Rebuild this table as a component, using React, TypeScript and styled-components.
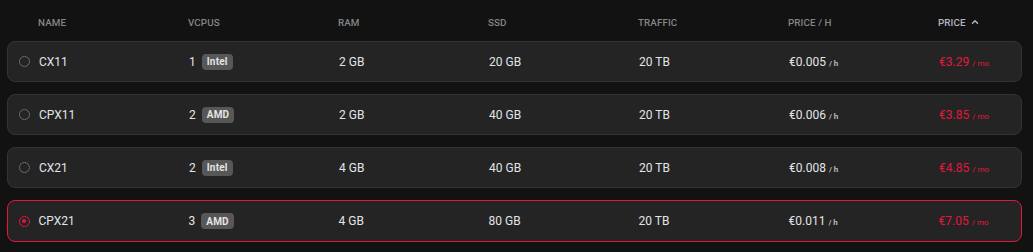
import React, { useState } from 'react';
import styled, { createGlobalStyle, css } from 'styled-components';
import { ChevronUp } from 'lucide-react';

const GlobalStyle = createGlobalStyle`
  html, body {
    margin: 0;
    padding: 0;
    background: #121212;
  }
  body {
    font-family: Roboto, "Liberation Sans", Arial, sans-serif;
    -webkit-font-smoothing: antialiased;
  }
`;

const Page = styled.div`
  padding: 0 11px 0 7px;
  display: flex;
  flex-direction: column;
  gap: 12px;
`;

const COLUMNS = '20px 150px 150px 150px 150px 150px 150px 1fr';

const HeaderRow = styled.div`
  display: grid;
  grid-template-columns: ${COLUMNS};
  align-items: center;
  box-sizing: border-box;
  height: 29px;
  padding: 15px 0 0 11px;
`;

const HeaderCell = styled.div<{ $active?: boolean }>`
  display: flex;
  align-items: center;
  gap: 4px;
  font-size: 9.8px;
  font-weight: 500;
  letter-spacing: 0.1px;
  text-transform: uppercase;
  color: ${({ $active }) => ($active ? '#b4b4c2' : '#858585')};
`;

const Row = styled.div<{ $selected?: boolean }>`
  display: grid;
  grid-template-columns: ${COLUMNS};
  align-items: center;
  box-sizing: border-box;
  height: 41px;
  padding-left: 11px;
  background: #242424;
  border: 1px solid #343434;
  border-radius: 8px;
  cursor: pointer;
  ${({ $selected }) =>
    $selected &&
    css`
      height: 42px;
      border: 1.5px solid #e3173e;
      padding-left: 10.5px;
    `}
`;

const Radio = styled.span<{ $selected?: boolean }>`
  box-sizing: border-box;
  width: 11px;
  height: 11px;
  border-radius: 50%;
  border: 1.5px solid ${({ $selected }) => ($selected ? '#e3173e' : '#6a6a6a')};
  display: flex;
  align-items: center;
  justify-content: center;
  &::after {
    content: '';
    width: 4px;
    height: 4px;
    border-radius: 50%;
    background: ${({ $selected }) => ($selected ? '#e3173e' : 'transparent')};
  }
`;

const Cell = styled.div`
  display: flex;
  align-items: center;
  gap: 6px;
  font-size: 12px;
  color: #e2e4e8;
`;

const Badge = styled.span`
  display: inline-flex;
  align-items: center;
  height: 16px;
  padding: 0 5px;
  border-radius: 4px;
  background: #575757;
  color: #e4e4e4;
  font-size: 10px;
  font-weight: 700;
  letter-spacing: 0.2px;
`;

const Price = styled.span<{ $accent?: boolean }>`
  font-size: 12px;
  color: ${({ $accent }) => ($accent ? '#e3173e' : '#e2e4e8')};
  display: inline-flex;
  align-items: baseline;
  gap: 3px;
`;

const Unit = styled.span<{ $accent?: boolean }>`
  font-size: 8px;
  font-weight: ${({ $accent }) => ($accent ? 400 : 700)};
  color: ${({ $accent }) => ($accent ? '#e3173e' : '#b9b9b9')};
`;

type Server = {
  name: string;
  vcpus: number;
  cpu: 'Intel' | 'AMD';
  ram: string;
  ssd: string;
  traffic: string;
  hourly: string;
  monthly: string;
};

const servers: Server[] = [
  { name: 'CX11', vcpus: 1, cpu: 'Intel', ram: '2 GB', ssd: '20 GB', traffic: '20 TB', hourly: '€0.005', monthly: '€3.29' },
  { name: 'CPX11', vcpus: 2, cpu: 'AMD', ram: '2 GB', ssd: '40 GB', traffic: '20 TB', hourly: '€0.006', monthly: '€3.85' },
  { name: 'CX21', vcpus: 2, cpu: 'Intel', ram: '4 GB', ssd: '40 GB', traffic: '20 TB', hourly: '€0.008', monthly: '€4.85' },
  { name: 'CPX21', vcpus: 3, cpu: 'AMD', ram: '4 GB', ssd: '80 GB', traffic: '20 TB', hourly: '€0.011', monthly: '€7.05' },
];

const App = () => {
  const [selected, setSelected] = useState('CPX21');

  return (
    <>
      <GlobalStyle />
      <Page>
        <HeaderRow>
          <span />
          <HeaderCell>Name</HeaderCell>
          <HeaderCell>vCPUs</HeaderCell>
          <HeaderCell>RAM</HeaderCell>
          <HeaderCell>SSD</HeaderCell>
          <HeaderCell>Traffic</HeaderCell>
          <HeaderCell>Price / h</HeaderCell>
          <HeaderCell $active>
            Price
            <ChevronUp size={10} strokeWidth={3.5} />
          </HeaderCell>
        </HeaderRow>
        {servers.map((s) => {
          const isSelected = s.name === selected;
          return (
            <Row key={s.name} $selected={isSelected} onClick={() => setSelected(s.name)}>
              <Radio $selected={isSelected} />
              <Cell>{s.name}</Cell>
              <Cell>
                {s.vcpus}
                <Badge>{s.cpu}</Badge>
              </Cell>
              <Cell>{s.ram}</Cell>
              <Cell>{s.ssd}</Cell>
              <Cell>{s.traffic}</Cell>
              <Cell>
                <Price>
                  {s.hourly}
                  <Unit>/ h</Unit>
                </Price>
              </Cell>
              <Cell>
                <Price $accent>
                  {s.monthly}
                  <Unit $accent>/ mo</Unit>
                </Price>
              </Cell>
            </Row>
          );
        })}
      </Page>
    </>
  );
};

export default App;
